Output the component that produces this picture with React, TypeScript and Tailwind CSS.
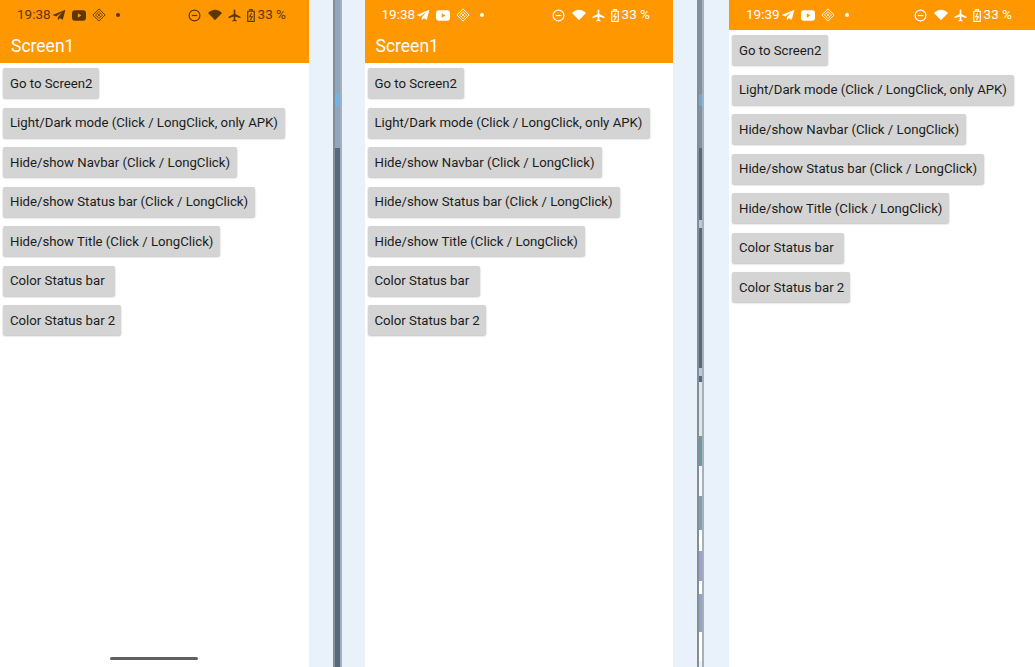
const buttons = [
  { label: "Go to Screen2", width: "w-[96px]" },
  { label: "Light/Dark mode (Click / LongClick, only APK)", width: "w-[282px]" },
  { label: "Hide/show Navbar (Click / LongClick)", width: "w-[234px]" },
  { label: "Hide/show Status bar (Click / LongClick)", width: "w-[252px]" },
  { label: "Hide/show Title (Click / LongClick)", width: "w-[217px]" },
  { label: "Color Status bar", width: "w-[112px]" },
  { label: "Color Status bar 2", width: "w-[118px]" },
];

// reflections on the phone edge, top to bottom
const edgeLeft = [
  { h: "h-[94px]", bg: "bg-[#8fa6bf]" },
  { h: "h-[12px]", bg: "bg-[#6db4ea]" },
  { h: "h-[42px]", bg: "bg-[#8fa6bf]" },
  { h: "h-[519px]", bg: "bg-[#55697f]" },
];

const edgeRight = [
  { h: "h-[94px]", bg: "bg-[#7d92a8]" },
  { h: "h-[12px]", bg: "bg-[#62ade0]" },
  { h: "h-[42px]", bg: "bg-[#7d92a8]" },
  { h: "h-[72px]", bg: "bg-[#55697f]" },
  { h: "h-[8px]", bg: "bg-[#b5c8ec]" },
  { h: "h-[140px]", bg: "bg-[#55697f]" },
  { h: "h-[8px]", bg: "bg-[#b5c8ec]" },
  { h: "h-[6px]", bg: "bg-[#55697f]" },
  { h: "h-[54px]", bg: "bg-[#dfe6ea]" },
  { h: "h-[30px]", bg: "bg-[#6a9aa6]" },
  { h: "h-[30px]", bg: "bg-[#f4f8fb]" },
  { h: "h-[34px]", bg: "bg-[#7ea0b4]" },
  { h: "h-[21px]", bg: "bg-[#ffffff]" },
  { h: "h-[30px]", bg: "bg-[#9aa2d2]" },
  { h: "h-[13px]", bg: "bg-[#ffffff]" },
  { h: "h-[38px]", bg: "bg-[#8fa4c8]" },
  { h: "h-[29px]", bg: "bg-[#ffffff]" },
];

function StatusBar({ color, time }: { color: string; time: string }) {
  return (
    <div className="flex items-center justify-between h-[30px] pl-[17px] pr-[23px]" style={{ color }}>
      <div className="flex items-center">
        <span className="text-[13.5px] leading-none">{time}</span>
        {/* telegram */}
        <svg viewBox="0 0 24 24" className="w-[14px] h-[14px] ml-[1px]" fill="currentColor">
          <path d="M23 3 1 12l6 2.5L18 7l-8 9v5l3.5-3.500 5 2.500z" />
        </svg>
        {/* youtube */}
        <svg viewBox="0 0 24 18" className="w-[14px] h-[11px] ml-[6px]">
          <rect width="24" height="18" rx="5" fill="currentColor" />
          <path d="m10 5 6 4-6 4z" fill="#ff9800" />
        </svg>
        {/* app icon */}
        <svg viewBox="0 0 24 24" className="w-[14px] h-[14px] ml-[6px]" fill="none" stroke="currentColor" strokeWidth="1.6">
          <path d="M12 1.500 22.500 12 12 22.500 1.500 12z" />
          <path d="m12 6 6 6-6 6-6-6zM9 9l6 6M15 9l-6 6" strokeWidth="1.3" />
        </svg>
        <span className="w-[4px] h-[4px] rounded-full ml-[10px]" style={{ backgroundColor: color }} />
      </div>
      <div className="flex items-center">
        {/* do not disturb */}
        <svg viewBox="0 0 24 24" className="w-[13px] h-[13px]" fill="none" stroke="currentColor" strokeWidth="2.2">
          <circle cx="12" cy="12" r="10" />
          <path d="M7 12h10" />
        </svg>
        {/* wifi */}
        <svg viewBox="0 0 24 20" className="w-[14px] h-[12px] ml-[7px]" fill="currentColor">
          <path d="M12 19 0 6.500C3 3.200 7.300 1 12 1s9 2.200 12 5.500z" />
        </svg>
        {/* airplane */}
        <svg viewBox="0 0 24 24" className="w-[13px] h-[13px] ml-[6px]" fill="currentColor">
          <path d="M10.500 2.500C10.500 1.500 11.200 1 12 1s1.500.5 1.500 1.500V9l9.500 5.500V17l-9.500-3v5.500l2.500 2V23L12 22l-4 1v-1.500l2.500-2V14L1 17v-2.500L10.500 9z" />
        </svg>
        {/* battery */}
        <svg viewBox="0 0 12 20" className="w-[8px] h-[13px] ml-[6px]" fill="none" stroke="currentColor" strokeWidth="1.8">
          <path d="M1 3.500h10V19H1zM4 3V1h4v2" />
          <path d="M7 6 4 12h4l-3 5" strokeWidth="1.6" />
        </svg>
        <span className="text-[13.5px] leading-none ml-[3px]">33 %</span>
      </div>
    </div>
  );
}

function Phone({ color, time, title, className }: { color: string; time: string; title: boolean; className: string }) {
  return (
    <div className={`bg-white flex flex-col shrink-0 h-full ${className}`}>
      <div className="bg-[#ff9800]">
        <StatusBar color={color} time={time} />
        {title && (
          <div className="h-[33px] pl-[11px] flex items-center text-white text-[17.5px] leading-none">Screen1</div>
        )}
      </div>
      <div className="flex flex-col items-start gap-[9.5px] pl-[3px] pt-[5px]">
        {buttons.map((b) => (
          <button
            key={b.label}
            className={`${b.width} h-[30px] pl-[7px] pt-[1px] text-left rounded-[2px] bg-[#d3d4d3] text-[#1c1c1c] text-[13.2px] leading-none shadow-[0_1px_2px_rgba(0,0,0,0.25)] whitespace-nowrap`}
          >
            {b.label}
          </button>
        ))}
      </div>
    </div>
  );
}

function Edge({ segments, className }: { segments: { h: string; bg: string }[]; className: string }) {
  return (
    <div className={`flex h-full shrink-0 ${className}`}>
      <div className="w-[2px] bg-[#858e96]" />
      <div className="flex-1 flex flex-col">
        {segments.map((s, i) => (
          <div key={i} className={`${s.h} ${s.bg}`} />
        ))}
      </div>
      <div className="w-[2px] bg-[#a7b0b8]" />
    </div>
  );
}

export default function App() {
  return (
    <div
      className="relative flex w-[1035px] h-[667px] overflow-hidden bg-[#e9f1fa]"
      style={{ fontFamily: "Roboto, sans-serif" }}
    >
      <Phone color="#5c3700" time="19:38" title className="w-[309px]" />
      <Edge segments={edgeLeft} className="w-[9px] ml-[24px]" />
      <Phone color="#fff" time="19:38" title className="w-[308.5px] ml-[22.5px]" />
      <Edge segments={edgeRight} className="w-[7px] ml-[24px]" />
      <Phone color="#fff" time="19:39" title={false} className="w-[306px] ml-[25px]" />
      {/* gesture bar */}
      <div className="absolute left-[110px] top-[657px] w-[88px] h-[3px] rounded-full bg-[#616161]" />
    </div>
  );
}
